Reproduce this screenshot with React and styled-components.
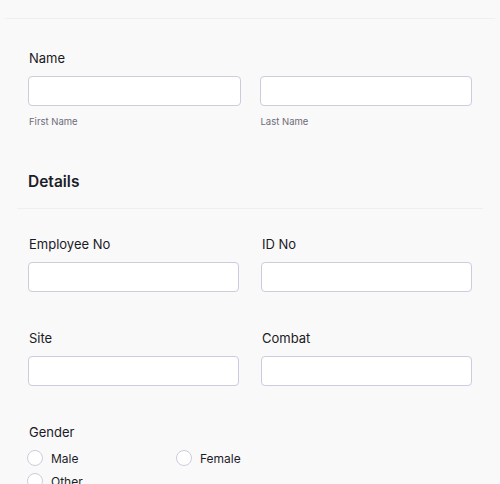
import React from "react"
import styled, { createGlobalStyle } from "styled-components"

const GlobalStyle = createGlobalStyle`
  html, body {
    margin: 0;
    padding: 0;
    background-color: #f9f9fa;
    font-family: Inter, "Noto Sans", "Liberation Sans", sans-serif;
    color: #1d1d28;
  }
  * {
    box-sizing: border-box;
  }
`

const Page = styled.div`
  width: 500px;
  height: 484px;
  overflow: hidden;
`

const Rule = styled.div`
  height: 1px;
  background-color: #efeff1;
  margin: ${(p) => p.$margin};
`

const Section = styled.div`
  padding: 0 28px;
`

const Label = styled.label`
  display: block;
  font-size: 13px;
  line-height: 16px;
  font-weight: 400;
  color: #1a1a24;
  margin-top: ${(p) => p.$top || 0}px;
  margin-bottom: 10px;
  padding-left: 1px;
`

const Row = styled.div`
  display: grid;
  grid-template-columns: 1fr 1fr;
  column-gap: ${(p) => p.$gap}px;
`

const Field = styled.div`
  display: flex;
  flex-direction: column;
`

const Input = styled.input`
  width: 100%;
  height: 30px;
  margin: 0;
  padding: 0 10px;
  background-color: #fff;
  border: 1px solid #ccccdf;
  border-radius: 4px;
  font-family: inherit;
  font-size: 13px;
  outline: none;
`

const SubLabel = styled.span`
  display: block;
  margin-top: 10px;
  padding-left: 1px;
  font-size: 9.5px;
  line-height: 12px;
  color: #6c6c78;
`

const Heading = styled.h3`
  margin: 44px 0 16px;
  font-size: 15.5px;
  line-height: 20px;
  font-weight: 600;
  color: #1d1d28;
`

const RadioGrid = styled.div`
  display: grid;
  grid-template-columns: 149px 149px;
  row-gap: 7px;
  margin-left: -1px;
`

const RadioOption = styled.label`
  display: flex;
  align-items: center;
  gap: 8px;
  height: 16px;
  font-size: 12px;
  color: #1d1d28;
  cursor: pointer;
`

const Circle = styled.span`
  width: 16px;
  height: 16px;
  border-radius: 50%;
  border: 1px solid #ccccdf;
  background-color: #fff;
  flex-shrink: 0;
`

function TextField({ label, top, sub }) {
  return (
    <Field>
      {label && <Label $top={top}>{label}</Label>}
      <Input type="text" />
      {sub && <SubLabel>{sub}</SubLabel>}
    </Field>
  )
}

function App() {
  const genders = ["Male", "Female", "Other"]

  return (
    <Page>
      <GlobalStyle />
      <Rule $margin="18px 5px 0" />
      <Section>
        <Label $top={31}>Name</Label>
        <Row $gap={19}>
          <TextField sub="First Name" />
          <TextField sub="Last Name" />
        </Row>

        <Heading>Details</Heading>
        <Rule $margin="0 -11px" />

        <Row $gap={22}>
          <TextField label="Employee No" top={27} />
          <TextField label="ID No" top={27} />
          <TextField label="Site" top={38} />
          <TextField label="Combat" top={38} />
        </Row>

        <Label $top={38}>Gender</Label>
        <RadioGrid>
          {genders.map((g) => (
            <RadioOption key={g}>
              <Circle />
              {g}
            </RadioOption>
          ))}
        </RadioGrid>
      </Section>
    </Page>
  )
}

export default App
